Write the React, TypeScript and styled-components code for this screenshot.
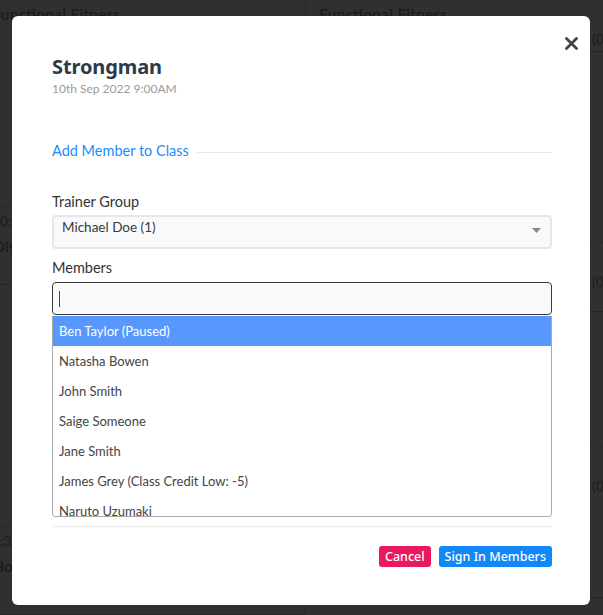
import React from 'react'
import styled, { createGlobalStyle } from 'styled-components'

const GlobalStyle = createGlobalStyle`
    html, body {
        margin: 0;
        padding: 0;
        background: #303030;
        overflow: hidden;
    }
    body {
        font-family: Lato, "Noto Sans", sans-serif;
    }
`

// the dimmed calendar behind the dialog
const Calendar = styled.div`
    display: grid;
    grid-template-columns: 327px 320px;
    margin-left: -21px;
    height: 615px;
    background: #303030;
    color: #1c1c1c;
    font-family: Lato, "Noto Sans", sans-serif;
`

const Column = styled.div`
    display: flex;
    flex-direction: column;
    border-right: 1px dotted #222;
`

const Slot = styled.div<{ $h: number; $dotted?: boolean }>`
    height: ${p => p.$h}px;
    box-sizing: border-box;
    border-bottom: 1px ${p => (p.$dotted ? 'dotted' : 'solid')} #252525;
    padding: 4px 0 0 13px;
    display: flex;
    flex-direction: column;
    gap: 6px;
`

const SlotTitle = styled.div`
    font-size: 16px;
    line-height: 20px;
    font-weight: 600;
    white-space: nowrap;
`

const SlotLine = styled.div`
    display: grid;
    grid-template-columns: 273px auto;
    font-size: 14px;
    line-height: 18px;
    white-space: nowrap;
`

const Overlay = styled.div`
    position: fixed;
    inset: 0;
`

const Modal = styled.div`
    position: absolute;
    left: 12px;
    top: 16px;
    width: 578px;
    height: 589px;
    box-sizing: border-box;
    background: #fff;
    border-radius: 6px;
    padding: 39px 38px 0 40px;
    display: flex;
    flex-direction: column;
`

const Close = styled.button`
    position: absolute;
    top: 19px;
    right: 11px;
    width: 16px;
    height: 16px;
    padding: 0;
    border: none;
    background: none;
    display: flex;
    align-items: center;
    justify-content: center;
    cursor: pointer;
`

const Title = styled.h2`
    margin: 0;
    font-family: "Noto Sans", sans-serif;
    font-size: 20px;
    line-height: 24px;
    font-weight: 700;
    color: #2d3a4b;
    letter-spacing: -0.1px;
`

const DateText = styled.div`
    margin-top: 2px;
    font-size: 12px;
    line-height: 16px;
    color: #9b9b9b;
`

const SectionHead = styled.div`
    margin-top: 44px;
    display: flex;
    align-items: center;
    gap: 8px;
    font-size: 14.5px;
    line-height: 20px;
    color: #1a8cff;

    &::after {
        content: '';
        flex: 1;
        height: 1px;
        margin-top: 2px;
        background: #e4e7ec;
    }
`

const Label = styled.label<{ $gap: number }>`
    display: block;
    margin-top: ${p => p.$gap}px;
    font-size: 14.5px;
    line-height: 20px;
    color: #333;
`

const SelectBox = styled.div`
    margin-top: 3px;
    height: 34px;
    box-sizing: border-box;
    border: 2px solid #e3e6ed;
    border-radius: 4px;
    background: #f8f9fb;
    padding: 1px 9px 0 8px;
    display: flex;
    justify-content: space-between;
    font-size: 13.5px;
    line-height: 18px;
    color: #3a3a3a;
`

const Arrow = styled.svg`
    margin-top: 10px;
`

const SearchInput = styled.div`
    margin-top: 4px;
    height: 33px;
    box-sizing: border-box;
    border: 1px solid #3a3a3a;
    border-radius: 4px;
    background: #f8f9fb;
    padding: 0 6px;
    display: flex;
    align-items: center;
`

const Caret = styled.span`
    width: 1px;
    height: 16px;
    background: #444;
`

const Options = styled.ul`
    margin: 1px 0 0;
    padding: 0;
    list-style: none;
    height: 200px;
    overflow: hidden;
    border: 1px solid #aaa;
    border-top: none;
    border-radius: 0 0 4px 4px;
`

const Option = styled.li<{ $active?: boolean }>`
    height: 30px;
    padding: 0 6px;
    display: flex;
    align-items: center;
    font-size: 13px;
    color: ${p => (p.$active ? '#fff' : '#444')};
    background: ${p => (p.$active ? '#5897fb' : '#fff')};
    white-space: nowrap;
`

const Rule = styled.hr`
    margin: 9px 0 0;
    border: none;
    height: 1px;
    background: #ececec;
`

const Actions = styled.div`
    margin-top: 19px;
    display: flex;
    justify-content: flex-end;
    gap: 8px;
`

const Button = styled.button<{ $tone: 'danger' | 'primary' }>`
    height: 21px;
    padding: 0 6px;
    border: none;
    border-radius: 3px;
    background: ${p => (p.$tone === 'danger' ? '#e8195e' : '#1287f7')};
    color: #fff;
    font-family: "Noto Sans", sans-serif;
    font-size: 12.5px;
    font-weight: 500;
    line-height: 21px;
    cursor: pointer;
`

const members = [
    'Ben Taylor (Paused)',
    'Natasha Bowen',
    'John Smith',
    'Saige Someone',
    'Jane Smith',
    'James Grey (Class Credit Low: -5)',
    'Naruto Uzumaki',
    'Peter Parker',
]

const App = () => {
    return (
        <>
            <GlobalStyle />
            <Calendar>
                <Column>
                    <Slot $h={208} $dotted>
                        <SlotTitle>Functional Fitness</SlotTitle>
                    </Slot>
                    <Slot $h={77}>
                        <SlotLine>10:00</SlotLine>
                        <SlotTitle>Olympic</SlotTitle>
                    </Slot>
                    <Slot $h={243} $dotted />
                    <Slot $h={87}>
                        <SlotLine>9:30</SlotLine>
                        <SlotTitle>Hour</SlotTitle>
                    </Slot>
                </Column>
                <Column>
                    <Slot $h={52}>
                        <SlotTitle>Functional Fitness</SlotTitle>
                        <SlotLine><span>6:00 - 7:00</span><span>(0/12)</span></SlotLine>
                    </Slot>
                    <Slot $h={191} $dotted />
                    <Slot $h={69}>
                        <SlotTitle>Strongman</SlotTitle>
                        <SlotLine><span>9:00 - 10:00</span><span>(0/10)</span></SlotLine>
                    </Slot>
                    <Slot $h={135} $dotted />
                    <Slot $h={151}>
                        <SlotTitle>Boxing</SlotTitle>
                        <SlotLine><span>17:00 - 18:00</span><span>(0/8)</span></SlotLine>
                    </Slot>
                </Column>
            </Calendar>

            <Overlay>
                <Modal>
                    <Close aria-label="Close">
                        <svg width="13" height="13" viewBox="0 0 13 13">
                            <path d="M1.5 1.5 L11.5 11.5 M11.5 1.5 L1.5 11.5" stroke="#444" strokeWidth="2.8" strokeLinecap="round" />
                        </svg>
                    </Close>

                    <Title>Strongman</Title>
                    <DateText>10th Sep 2022 9:00AM</DateText>

                    <SectionHead>Add Member to Class</SectionHead>

                    <Label $gap={31}>Trainer Group</Label>
                    <SelectBox>
                        <span>Michael Doe (1)</span>
                        <Arrow width="9" height="5" viewBox="0 0 9 5">
                            <path d="M0 0 L9 0 L4.5 5 Z" fill="#888" />
                        </Arrow>
                    </SelectBox>

                    <Label $gap={9}>Members</Label>
                    <SearchInput>
                        <Caret />
                    </SearchInput>
                    <Options>
                        {members.map((m, i) => (
                            <Option key={m} $active={i === 0}>{m}</Option>
                        ))}
                    </Options>

                    <Rule />

                    <Actions>
                        <Button $tone="danger">Cancel</Button>
                        <Button $tone="primary">Sign In Members</Button>
                    </Actions>
                </Modal>
            </Overlay>
        </>
    )
}

export default App
